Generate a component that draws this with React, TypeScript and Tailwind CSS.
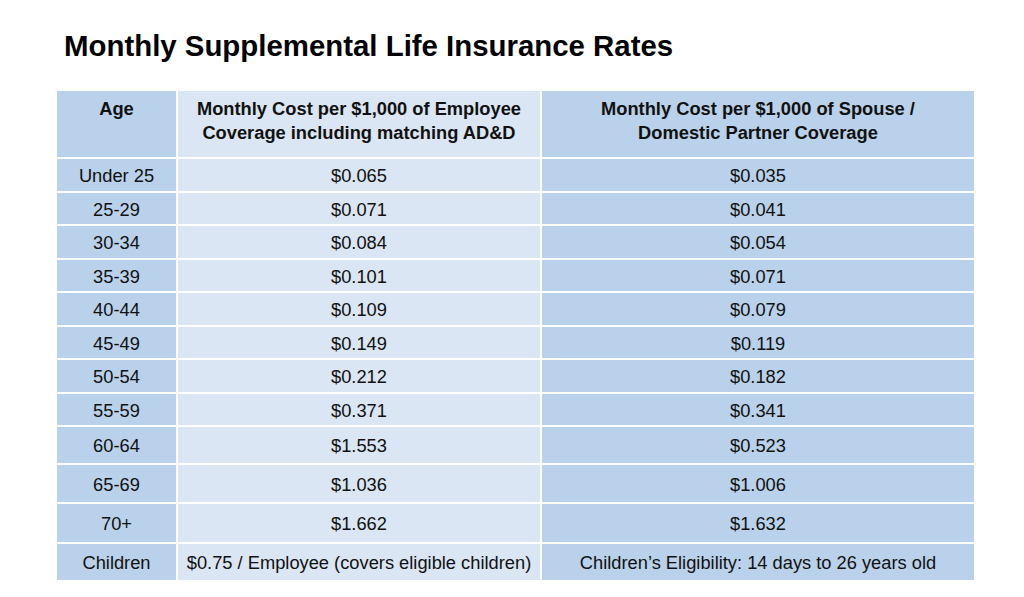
import React from "react";

const rows: { age: string; emp: string; sp: string; h: string }[] = [
  { age: "Under 25", emp: "$0.065", sp: "$0.035", h: "h-[31.5px]" },
  { age: "25-29", emp: "$0.071", sp: "$0.041", h: "h-[31.5px]" },
  { age: "30-34", emp: "$0.084", sp: "$0.054", h: "h-[31.5px]" },
  { age: "35-39", emp: "$0.101", sp: "$0.071", h: "h-[31.5px]" },
  { age: "40-44", emp: "$0.109", sp: "$0.079", h: "h-[31.5px]" },
  { age: "45-49", emp: "$0.149", sp: "$0.119", h: "h-[31.5px]" },
  { age: "50-54", emp: "$0.212", sp: "$0.182", h: "h-[31.5px]" },
  { age: "55-59", emp: "$0.371", sp: "$0.341", h: "h-[31.5px]" },
  { age: "60-64", emp: "$1.553", sp: "$0.523", h: "h-[36px]" },
  { age: "65-69", emp: "$1.036", sp: "$1.006", h: "h-[37px]" },
  { age: "70+", emp: "$1.662", sp: "$1.632", h: "h-[38px]" },
  {
    age: "Children",
    emp: "$0.75 / Employee (covers eligible children)",
    sp: "Children\u2019s Eligibility: 14 days to 26 years old",
    h: "h-[36px]",
  },
];

export default function App() {
  return (
    <div
      className="w-[1024px] h-[597px] bg-white text-[#111] overflow-hidden"
      style={{ fontFamily: '"Liberation Sans", Arial, sans-serif' }}
    >
      <h1 className="pl-[64px] pt-[29px] text-[29.4px] leading-[34px] font-bold text-black">
        Monthly Supplemental Life Insurance Rates
      </h1>
      <div className="ml-[57px] mt-[28px] grid grid-cols-[119px_362px_432px] gap-[2px] text-[18.3px]">
        <div className="h-[66px] bg-[#b9d1ea] flex justify-center pt-[6px] font-bold leading-[24px]">
          Age
        </div>
        <div className="h-[66px] bg-[#dae6f3] flex justify-center text-center pt-[6px] font-bold leading-[24px]">
          Monthly Cost per $1,000 of Employee
          <br />
          Coverage including matching AD&amp;D
        </div>
        <div className="h-[66px] bg-[#b9d1ea] flex justify-center text-center pt-[6px] font-bold leading-[24px]">
          Monthly Cost per $1,000 of Spouse /
          <br />
          Domestic Partner Coverage
        </div>
        {rows.map((r) => (
          <React.Fragment key={r.age}>
            <div className={`${r.h} bg-[#b9d1ea] flex items-center justify-center pt-[2px]`}>{r.age}</div>
            <div className={`${r.h} bg-[#dae6f3] flex items-center justify-center pt-[2px]`}>{r.emp}</div>
            <div className={`${r.h} bg-[#b9d1ea] flex items-center justify-center pt-[2px]`}>{r.sp}</div>
          </React.Fragment>
        ))}
      </div>
    </div>
  );
}
